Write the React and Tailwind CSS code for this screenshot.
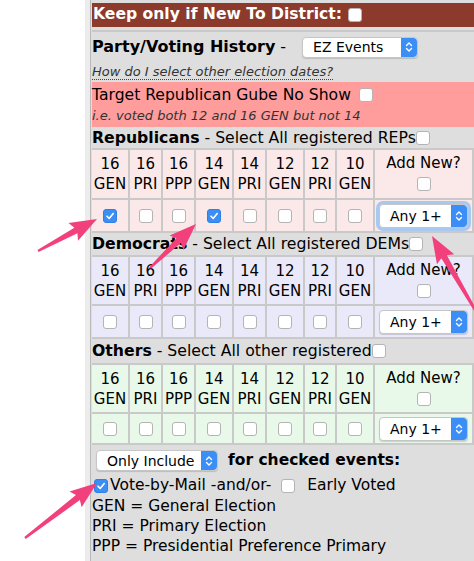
import React from "react";

function Check({ checked = false, className = "" }) {
  return checked ? (
    <span className={"inline-flex items-center justify-center w-[14px] h-[14px] rounded-[3px] bg-[#3b8ef3] border border-[#2f7fe6] align-middle shrink-0 " + className}>
      <svg width="10" height="10" viewBox="0 0 10 10"><path d="M2 5.2 L4.2 7.4 L8.2 2.6" fill="none" stroke="white" strokeWidth="1.6" strokeLinecap="round" strokeLinejoin="round" /></svg>
    </span>
  ) : (
    <span className={"inline-block w-[14px] h-[14px] rounded-[3px] bg-white border border-[#b4b4b4] align-middle shrink-0 " + className}></span>
  );
}

function Stepper() {
  return (
    <span className="flex items-center justify-center w-[16px] h-full bg-[#3a8ef6] rounded-r-[4px]">
      <svg width="8" height="12" viewBox="0 0 8 12"><path d="M1.5 4.5 L4 2 L6.5 4.5 M1.5 7.5 L4 10 L6.5 7.5" fill="none" stroke="white" strokeWidth="1.4" strokeLinecap="round" strokeLinejoin="round" /></svg>
    </span>
  );
}

function Select({ label, className = "", focus = false }) {
  return (
    <span className={"inline-flex items-stretch h-[21px] bg-white rounded-[4px] border border-[#c6c6c6] shadow-[0_1px_1px_rgba(0,0,0,0.15)] " + (focus ? "ring-[3px] ring-[#a9c8ef] " : "") + className}>
      <span className="flex-1 flex items-center pl-[10px] text-[14px] leading-none text-black">{label}</span>
      <Stepper />
    </span>
  );
}

const COLS = [
  ["16", "GEN"], ["16", "PRI"], ["16", "PPP"], ["14", "GEN"],
  ["14", "PRI"], ["12", "GEN"], ["12", "PRI"], ["10", "GEN"],
];

function ElectionTable({ cell, checked = [], focus = false, headerH, rowH }) {
  return (
    <div className="grid grid-cols-[36px_31px_31px_36px_31px_36px_30px_36px_1fr] gap-[2px] bg-[#c9c9c9] py-[2px] pr-[2px]">
      {COLS.map(([a, b], i) => (
        <div key={"h" + i} className={"flex flex-col items-center justify-center text-[15px] leading-[20px] " + cell + " " + headerH}>
          <span>{a}</span>
          <span>{b}</span>
        </div>
      ))}
      <div className={"flex flex-col items-center pt-[3px] text-[15px] leading-[20px] " + cell + " " + headerH}>
        <span>Add New?</span>
        <Check className="mt-[4px]" />
      </div>
      {COLS.map((c, i) => (
        <div key={"c" + i} className={"flex items-center justify-center " + cell + " " + rowH}>
          <Check checked={checked.includes(i)} />
        </div>
      ))}
      <div className={"flex items-center justify-center " + cell + " " + rowH}>
        <Select label="Any 1+" className="w-[89px] h-[24px]" focus={focus} />
      </div>
    </div>
  );
}

function Arrow({ x1, y1, x2, y2 }) {
  const dx = x2 - x1, dy = y2 - y1;
  const len = Math.hypot(dx, dy);
  const ux = dx / len, uy = dy / len;
  const nx = -uy, ny = ux;
  const L = 24, W = 10, w = 3.2, wt = 1.2;
  const bx = x2 - ux * L, by = y2 - uy * L;
  const pts = [
    [x1 + nx * wt, y1 + ny * wt],
    [bx + nx * w, by + ny * w],
    [bx + nx * W - ux * 3, by + ny * W - uy * 3],
    [x2, y2],
    [bx - nx * W - ux * 3, by - ny * W - uy * 3],
    [bx - nx * w, by - ny * w],
    [x1 - nx * wt, y1 - ny * wt],
  ];
  return <polygon points={pts.map((p) => p.join(",")).join(" ")} fill="#f2407c" />;
}

export default function App() {
  return (
    <div className="relative w-[474px] h-[561px] overflow-hidden bg-white font-['DejaVu_Sans',sans-serif] text-black">
      <div className="flex h-full">
        <div className="w-[85px] shrink-0" />
        <div className="flex-1 border-l-[5px] border-[#ececec]">
          <div className="h-full border-l border-[#b9b9b9] bg-[#dedede] pl-px pt-[3px]">
            <div className="h-[24px] bg-[#8c3a2c] flex items-center gap-[6px] pl-[1px] text-white font-bold text-[15.6px]">
              <span>Keep only if New To District:</span>
              <Check />
            </div>
            <div className="mt-[3px] h-[2px] bg-[#c9c9c9]" />
            <div className="h-[30px] flex items-center">
              <span className="font-bold text-[16px]">Party/Voting History</span>
              <span className="text-[16px] ml-[5px]">-</span>
              <Select label="EZ Events" className="ml-[16px] w-[116px]" />
            </div>
            <div className="h-[20px] flex items-center">
              <span className="italic text-[13px] text-[#333] border-b border-dotted border-[#444] leading-[15px]">How do I select other election dates?</span>
            </div>
            <div className="bg-[#ff9d9d] h-[45px] flex flex-col justify-center">
              <div className="flex items-center gap-[8px] text-[15.6px] leading-[22px]">
                <span>Target Republican Gube No Show</span>
                <Check />
              </div>
              <div className="italic text-[13px] leading-[20px] text-[#333]">i.e. voted both 12 and 16 GEN but not 14</div>
            </div>
            <div className="h-[21px] flex items-center text-[15.7px]">
              <span className="font-bold">Republicans</span>
              <span>&nbsp;- Select All registered REPs</span>
              <Check />
            </div>
            <ElectionTable cell="bg-[#fbe9e9]" checked={[0, 3]} focus headerH="h-[48px]" rowH="h-[31px]" />
            <div className="h-[22px] flex items-center text-[15.7px]">
              <span className="font-bold">Democrats</span>
              <span>&nbsp;- Select All registered DEMs</span>
              <Check />
            </div>
            <ElectionTable cell="bg-[#e9e9f9]" headerH="h-[47px]" rowH="h-[31px]" />
            <div className="h-[24px] flex items-center text-[15.7px]">
              <span className="font-bold">Others</span>
              <span>&nbsp;- Select All other registered</span>
              <Check />
            </div>
            <ElectionTable cell="bg-[#e9f9e9]" headerH="h-[47px]" rowH="h-[29px]" />
            <div className="h-[31px] flex items-center pl-[4px]">
              <Select label="Only Include" className="w-[122px]" />
              <span className="ml-[10px] font-bold text-[15.5px]">for checked events:</span>
            </div>
            <div className="h-[20px] flex items-center text-[15.5px] pl-[2px]">
              <Check checked />
              <span className="ml-[2px]">Vote-by-Mail -and/or-</span>
              <Check className="ml-[10px]" />
              <span className="ml-[12px]">Early Voted</span>
            </div>
            <div className="text-[15.5px] leading-[20px]">GEN = General Election</div>
            <div className="text-[15.5px] leading-[20px]">PRI = Primary Election</div>
            <div className="text-[15.5px] leading-[20px]">PPP = Presidential Preference Primary</div>
          </div>
        </div>
      </div>
      <svg className="absolute inset-0 pointer-events-none" width="474" height="561">
        <Arrow x1={38} y1={251} x2={97} y2={219} />
        <Arrow x1={150} y1={268} x2={196} y2={224} />
        <Arrow x1={478} y1={315} x2={432} y2={236} />
        <Arrow x1={25} y1={538} x2={97} y2={483} />
      </svg>
    </div>
  );
}
